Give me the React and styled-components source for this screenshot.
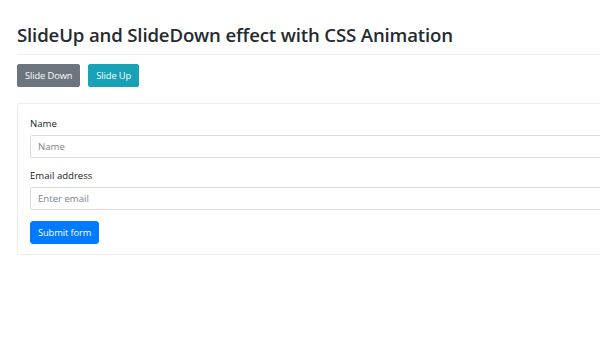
import React from "react";
import styled, { createGlobalStyle } from "styled-components";

const GlobalStyle = createGlobalStyle`
  html, body {
    margin: 0;
    padding: 0;
    background: #fff;
    overflow: hidden;
  }
  body {
    font-family: "Open Sans", "Noto Sans", sans-serif;
    color: #212529;
  }
  * {
    box-sizing: border-box;
  }
`;

const Page = styled.div`
  width: 800px;
  padding: 22px 0 0 17px;
`;

const Title = styled.h3`
  margin: 0;
  font-size: 18.6px;
  font-weight: 600;
  line-height: 26px;
  letter-spacing: -0.15px;
  color: #252a2f;
`;

const Divider = styled.hr`
  margin: 6px 0 9px;
  border: 0;
  border-top: 1px solid #ececec;
`;

const Toolbar = styled.div`
  display: flex;
  gap: 8px;
  margin-bottom: 16px;
`;

const Button = styled.button`
  height: 23px;
  padding: 0 7px;
  border: 1px solid ${({ $bg }) => $bg};
  border-radius: 2px;
  background: ${({ $bg }) => $bg};
  color: #fff;
  font-family: inherit;
  font-size: 9.3px;
  letter-spacing: -0.1px;
  line-height: 1;
  cursor: pointer;
`;

const Card = styled.div`
  border: 1px solid #ececec;
  border-radius: 3px;
  padding: 13px 12px 10px;
`;

const Group = styled.div`
  margin-bottom: ${({ $mb }) => $mb}px;
`;

const Label = styled.label`
  display: block;
  font-size: 9.6px;
  line-height: 14px;
  margin-bottom: 4px;
  color: #212529;
`;

const Input = styled.input`
  display: block;
  width: 100%;
  height: 23px;
  padding: 0 7px;
  border: 1px solid #dcdcdc;
  border-radius: 2px;
  font-family: inherit;
  font-size: 9.6px;
  color: #495057;
  outline: none;

  &::placeholder {
    color: #7d848b;
  }
`;

const Submit = styled(Button)`
  border-radius: 3px;
`;

export default function App() {
  return (
    <>
      <GlobalStyle />
      <Page>
        <Title>SlideUp and SlideDown effect with CSS Animation</Title>
        <Divider />
        <Toolbar>
          <Button $bg="#6c757d">Slide Down</Button>
          <Button $bg="#17a2b8">Slide Up</Button>
        </Toolbar>
        <Card>
          <Group $mb={11}>
            <Label>Name</Label>
            <Input placeholder="Name" />
          </Group>
          <Group $mb={9}>
            <Label>Email address</Label>
            <Input placeholder="Enter email" />
          </Group>
          <Submit $bg="#007bff">Submit form</Submit>
        </Card>
      </Page>
    </>
  );
}
